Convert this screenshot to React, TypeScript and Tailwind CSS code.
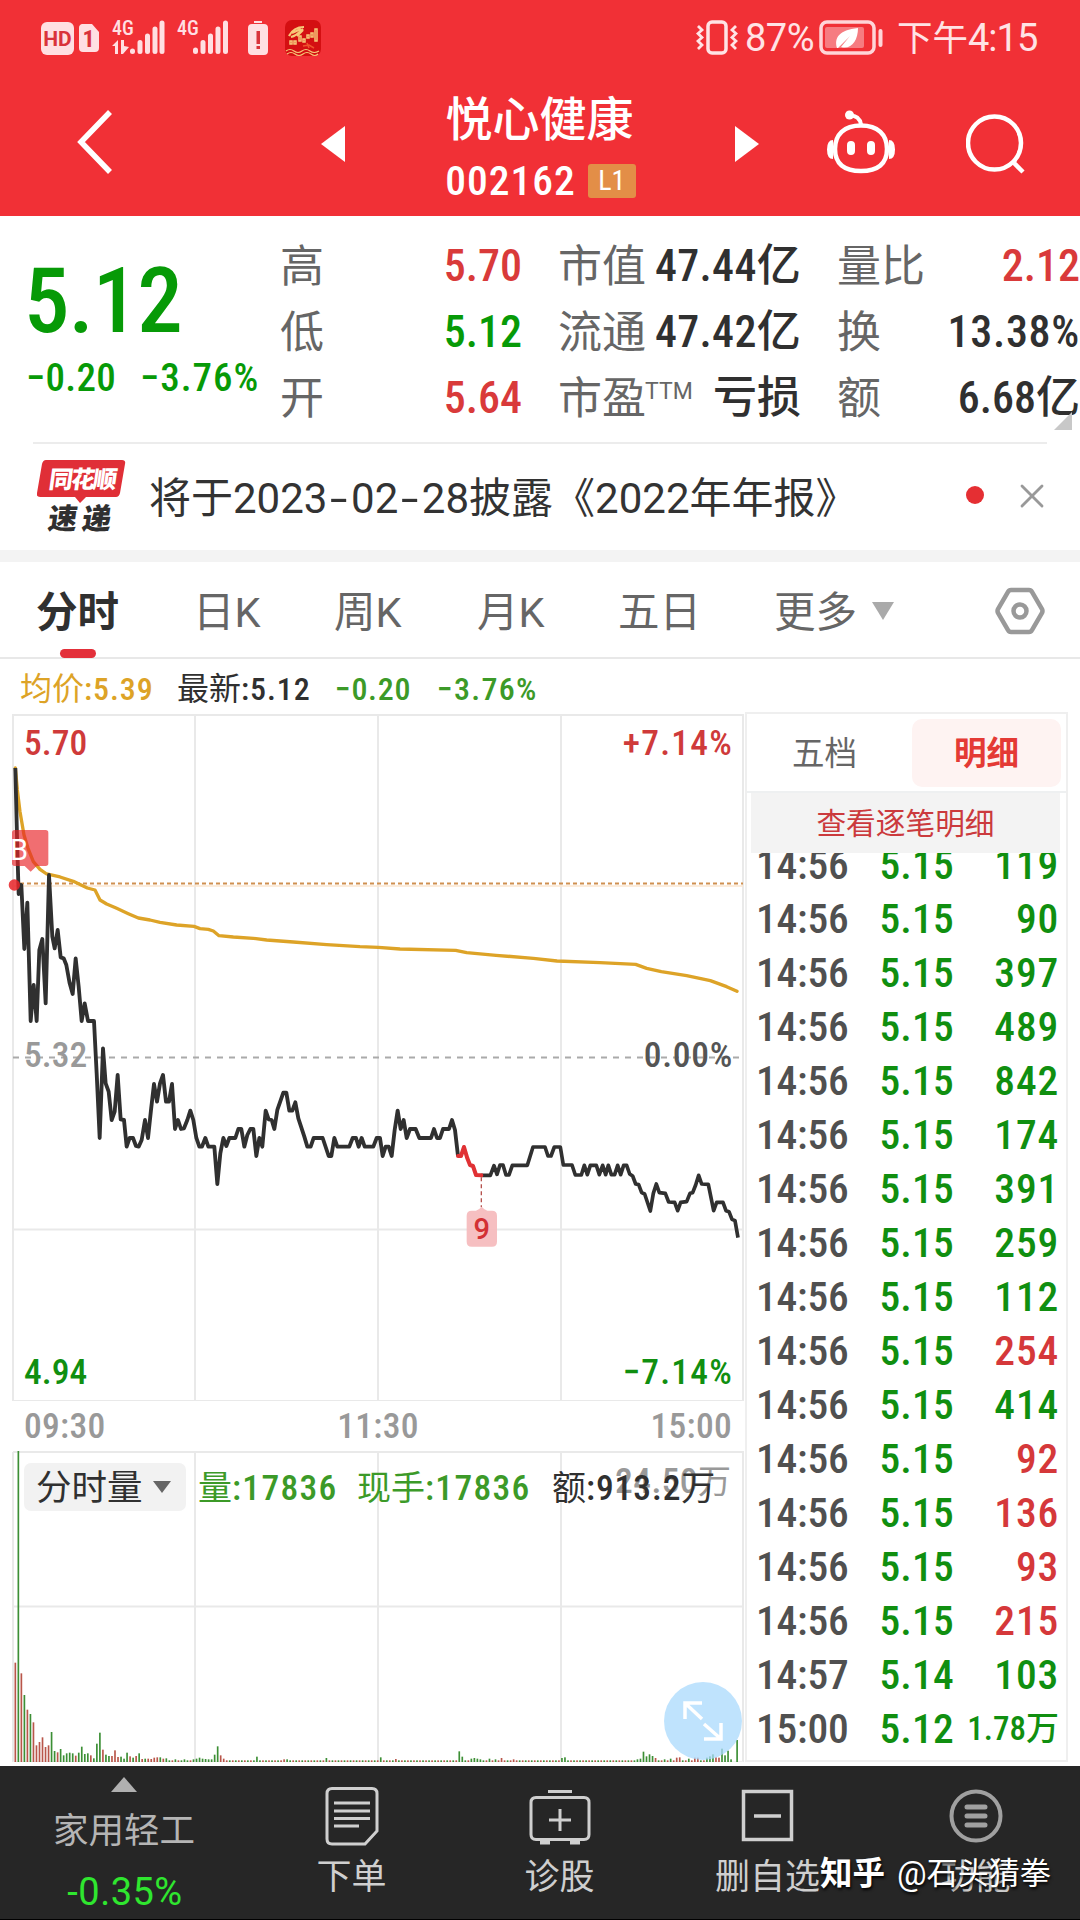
import type { ReactNode } from 'react';
import { X } from 'lucide-react';

const trades = [
  { time: '14:56', price: '5.15', amount: '119', up: false },
  { time: '14:56', price: '5.15', amount: '90', up: false },
  { time: '14:56', price: '5.15', amount: '397', up: false },
  { time: '14:56', price: '5.15', amount: '489', up: false },
  { time: '14:56', price: '5.15', amount: '842', up: false },
  { time: '14:56', price: '5.15', amount: '174', up: false },
  { time: '14:56', price: '5.15', amount: '391', up: false },
  { time: '14:56', price: '5.15', amount: '259', up: false },
  { time: '14:56', price: '5.15', amount: '112', up: false },
  { time: '14:56', price: '5.15', amount: '254', up: true },
  { time: '14:56', price: '5.15', amount: '414', up: false },
  { time: '14:56', price: '5.15', amount: '92', up: true },
  { time: '14:56', price: '5.15', amount: '136', up: true },
  { time: '14:56', price: '5.15', amount: '93', up: true },
  { time: '14:56', price: '5.15', amount: '215', up: true },
  { time: '14:57', price: '5.14', amount: '103', up: false },
  { time: '15:00', price: '5.12', amount: '1.78万', up: false },
];

// Chart lines, in thirds of a pixel
const pricePoints =
  '46,84 52,330 56,462 64,435 73,627 82,488 92,843 101,735 110,843 118,630 127,597 137,790 147,405 157,590 164,625 173,570 182,652 191,655 199,675 209,730 218,762 227,655 236,740 245,843 254,790 264,843 282,843 290,1000 299,1194 309,925 317,1030 326,1055 335,1140 344,1115 353,1005 362,1138 372,1140 380,1220 389,1194 399,1194 408,1218 416,1220 425,1200 435,1140 444,1194 453,1110 462,1032 471,1085 480,1030 489,1005 498,1085 507,1085 516,1032 525,1167 534,1140 543,1167 552,1165 562,1140 571,1112 580,1140 589,1194 598,1220 606,1220 616,1194 625,1220 643,1220 652,1332 661,1240 670,1194 679,1218 688,1194 706,1194 715,1167 724,1167 733,1220 742,1185 751,1167 760,1167 769,1248 778,1194 787,1220 797,1112 806,1138 815,1140 823,1167 832,1110 850,1058 859,1058 868,1112 877,1112 886,1087 895,1135 913,1190 922,1220 932,1220 941,1194 968,1194 986,1248 994,1248 1003,1194 1012,1220 1048,1220 1058,1194 1068,1194 1076,1220 1085,1194 1094,1220 1120,1220 1130,1194 1140,1194 1148,1248 1157,1220 1166,1220 1175,1248 1184,1170 1193,1112 1202,1167 1211,1140 1220,1194 1230,1167 1247,1167 1258,1194 1293,1194 1302,1167 1311,1194 1320,1194 1329,1167 1347,1167 1356,1140 1365,1170 1374,1248';
const signalPoints = '1374,1248 1383,1248 1392,1221 1402,1255 1410,1275 1419,1278 1428,1305 1444,1306';
const closingPoints =
  '1444,1306 1471,1306 1482,1277 1491,1303 1500,1275 1509,1275 1518,1305 1527,1305 1537,1276 1582,1276 1599,1221 1635,1221 1644,1248 1653,1248 1663,1221 1681,1221 1690,1275 1716,1275 1726,1305 1744,1305 1753,1276 1762,1304 1771,1276 1789,1276 1798,1304 1808,1276 1817,1304 1825,1276 1834,1304 1844,1304 1853,1276 1862,1304 1871,1276 1880,1276 1889,1302 1898,1308 1907,1332 1916,1334 1925,1358 1934,1362 1951,1413 1960,1360 1969,1332 1978,1358 1996,1360 2006,1386 2024,1387 2033,1412 2042,1387 2060,1385 2070,1360 2078,1358 2087,1335 2096,1306 2105,1332 2125,1333 2141,1412 2150,1387 2169,1387 2178,1412 2187,1415 2196,1438 2205,1442 2214,1493';
const averagePoints =
  '46,84 52,150 60,215 72,285 84,325 100,365 120,388 140,402 180,411 220,424 262,444 285,450 300,480 320,492 350,505 385,521 415,534 450,540 480,547 530,555 582,559 600,566 625,568 640,573 657,587 700,591 760,595 800,600 880,606 980,614 1080,620 1135,622 1200,627 1367,631 1400,638 1488,646 1600,655 1671,663 1800,668 1907,673 1940,685 1984,695 2060,707 2131,722 2180,740 2211,754';

// Opening volume bars, one per minute: [height, rising]
const opening: [number, boolean][] = [
  [298, true], [934, false], [266, true], [201, false], [157, true], [144, false], [119, true], [50, true], [60, true], [74, true],
  [45, true], [50, true], [90, false], [33, false], [29, true], [39, false], [20, false], [26, false], [28, false], [26, false],
  [19, true], [28, false], [46, false], [24, false], [26, false], [20, true], [11, false], [55, false], [88, false], [37, true],
  [22, false], [18, false], [18, true], [35, true], [15, true], [16, false], [10, false], [28, false], [17, true], [13, false],
  [18, true], [26, false], [9, true], [10, false], [10, true], [9, true], [13, true], [14, true], [14, false], [10, true],
];

const spikes: Record<number, number> = {
  50: 11, 53: 8, 56: 8, 59: 8, 60: 10, 61: 13, 62: 10, 63: 9, 64: 8, 65: 8, 66: 22, 67: 47, 68: 20, 69: 10,
  80: 16, 89: 8, 90: 8, 103: 12, 121: 14, 126: 9, 147: 32, 148: 16, 151: 10, 152: 12, 153: 10, 154: 8, 157: 10, 159: 8, 161: 12, 165: 8,
  181: 12, 182: 14, 206: 8, 207: 10, 208: 31, 209: 17, 210: 23, 211: 18, 212: 12, 215: 8, 217: 10, 219: 13, 220: 14, 223: 10,
  225: 13, 226: 13, 229: 13, 230: 17, 231: 23, 232: 14, 233: 13, 234: 40, 235: 20, 236: 34, 237: 8, 238: 0, 239: 66,
};
const redMinutes = [68, 69, 89, 126, 161, 165, 212, 219, 220, 225, 226, 232, 233];

const volumes = Array.from({ length: 240 }, (_, i) => {
  if (i < opening.length) return { height: opening[i][0], up: opening[i][1] };
  return { height: spikes[i] ?? 5, up: redMinutes.includes(i) || (!(i in spikes) && i % 2 === 0) };
});

function StatusBar() {
  return (
    <div className="flex h-[74px] items-center pt-[2px] text-[#ffe3e5]">
      <svg className="ml-[41px]" width="284" height="54" viewBox="0 -8 284 54" fill="#ffdfe2">
        <rect x="0" y="3" width="33" height="33" rx="6" />
        <text x="16.500" y="27" textAnchor="middle" fontSize="21" fontWeight="700" fill="#d9333b" className="font-stretch-[95%]">HD</text>
        <path d="M41 5h10l7 8v16a4 4 0 0 1-4 4H42a4 4 0 0 1-4-4V9a4 4 0 0 1 3-4z" />
        <text x="47.500" y="28" textAnchor="middle" fontSize="24" fontWeight="700" fill="#d9333b">1</text>
        <text x="71" y="16" fontSize="20" fontWeight="500">4G</text>
        <path d="M71 27l6-6v14h-3v-8zM80 21h3v6l5 1-6 7h-2z" />
        <g stroke="#ffdfe2" strokeWidth="5" strokeLinecap="round">
          <path d="M91.500 32v.5M99 23.500v9M106.500 17v15.500M114 10v22.500M121 4v28.500" />
          <path d="M154.500 31v1.500M162 23.500v9M169.500 17v15.500M177 10v22.500M184.500 4v28.500" />
        </g>
        <text x="136" y="16" fontSize="20" fontWeight="500">4G</text>
        <path d="M213 2h8v2h-8zM211 5h12a4 4 0 0 1 4 4v23a4 4 0 0 1-4 4h-12a4 4 0 0 1-4-4V9a4 4 0 0 1 4-4z" />
        <path d="M215.500 12h3.500v13h-3.500zM215.500 27h3.500v3h-3.500z" fill="#d9333b" />
        <rect x="244" y="1" width="36" height="36" rx="7" fill="#d40f12" />
        <g fill="none" stroke="#f6c878" strokeWidth="1.500">
          <path d="M248 17c3-6 8-9 15-9M250 18c5-1 8-4 12-8M251 14l9-4M256 17l6-6" strokeWidth="2.200" />
          <path d="M249 22h2v3h-2zM253 22h2v3h-2zM258 17h2v5h-2zM262 20h2v3h-2zM266 16h2v3h-2zM270 14h2v4h-2zM274 10h2v12h-2z" />
          <path d="M245 32q4-3 8 0t8 0 8 0 9 0M246 35q4-3 8 0t8 0 8 0 7 0" strokeWidth="1.200" />
          <path d="M262 27l6-1 5 3M266 24l2 5" stroke="#f0522d" />
        </g>
      </svg>
      <svg className="ml-[371px]" width="42" height="36" viewBox="0 0 42 36" fill="none" stroke="#ffe3e5" strokeWidth="3">
        <rect x="12" y="2" width="18" height="31" rx="4" strokeWidth="3.500" />
        <path d="M2 6l4 4-4 3.500 4 4-4 3.500 4 4-4 4M40 6l-4 4 4 3.500-4 4 4 3.500-4 4 4 4" strokeWidth="2.800" />
      </svg>
      <span className="ml-[7px] w-[70px] text-[38px] leading-none tracking-[-0.5px] font-stretch-[90%]">87%</span>
      <svg className="ml-[4px]" width="66" height="36" viewBox="0 0 66 36" fill="none">
        <rect x="2" y="2" width="53" height="31" rx="6" stroke="#ffd5d8" strokeWidth="3.500" />
        <rect x="6" y="7" width="39" height="21" rx="2" fill="#f67c81" />
        <path d="M18 28c-3-10 2-18 21-20 0 13-7 22-17 19l9-11-12 12z" fill="#fff" />
        <path d="M61.500 11v14" stroke="#ffd5d8" strokeWidth="4" strokeLinecap="round" />
      </svg>
      <span className="ml-[12px] text-[35.500px] leading-none whitespace-nowrap">
        下午<span className="text-[38px] tracking-[-1px] font-stretch-[88%]">4:15</span>
      </span>
    </div>
  );
}

function Header() {
  return (
    <header className="h-[216px] shrink-0 bg-[#f13036] text-white">
      <StatusBar />
      <div className="flex h-[140px] items-center">
        <svg className="mb-1 ml-[76px]" width="38" height="66" viewBox="0 0 38 66" fill="none" stroke="#fff" strokeWidth="5.500">
          <path d="M34 3L5 33l29 30" />
        </svg>
        <svg className="ml-[207px]" width="24" height="36" viewBox="0 0 24 36" fill="#fff">
          <path d="M24 0v36L0 18z" />
        </svg>
        <div className="flex w-[390px] flex-col items-center">
          <h1 className="mt-[2px] ml-[-1px] text-[47px] leading-[56px] font-medium">悦心健康</h1>
          <div className="mt-[16px] ml-px flex h-[34px] items-center gap-[12px]">
            <span className="text-[41.500px] leading-none font-medium tracking-[1px]">002162</span>
            <span className="flex h-[34px] w-[48px] items-center justify-center rounded-[3px] bg-[#e38e47] text-[28px] leading-none">L1</span>
          </div>
        </div>
        <svg width="24" height="36" viewBox="0 0 24 36" fill="#fff">
          <path d="M0 0v36l24-18z" />
        </svg>
        <svg className="mb-1 ml-[67px]" width="70" height="64" viewBox="0 0 70 64" fill="none" stroke="#fff">
          <path d="M35 15.500c17 0 26 9 26 23.500s-9 22-26 22-26-7.500-26-22 9-23.500 26-23.500z" strokeWidth="4.500" />
          <path d="M7 31c-3 0-5 3-5 8.500s2 8.500 5 8.500M63 31c3 0 5 3 5 8.500s-2 8.500-5 8.500" fill="#fff" strokeWidth="2" />
          <path d="M24 5.500c7 0 10 3 11 9" strokeWidth="4" />
          <circle cx="23.500" cy="5" r="4.500" fill="#fff" stroke="none" />
          <path d="M25 35v6M45 35v6" strokeWidth="8" strokeLinecap="round" />
        </svg>
        <svg className="mb-px ml-[70px]" width="60" height="60" viewBox="0 0 60 60" fill="none" stroke="#fff" strokeWidth="4.500">
          <circle cx="28.500" cy="29" r="26.500" />
          <path d="M47 48l10 10" />
        </svg>
      </div>
    </header>
  );
}

function QuoteRow({ label, value, color, sup }: { label: string; value: string; color: string; sup?: string }) {
  return (
    <div className="flex h-[66px] items-center justify-between leading-none whitespace-nowrap">
      <span className="flex pt-px text-[44px] text-[#666]">
        {label}
        {sup && <span className="mt-[3px] ml-[-1px] text-[23px] font-stretch-[100%]">{sup}</span>}
      </span>
      <span className={`text-[44px] font-medium ${color}`}>{value}</span>
    </div>
  );
}

function Quote() {
  return (
    <section className="relative flex h-[226px] shrink-0">
      <div className="w-[280px] pl-[24px] whitespace-nowrap text-[#079a07]">
        <div className="mt-[39px] text-[91px] leading-[92px] font-medium tracking-[-1px]">5.12</div>
        <div className="mt-[11px] flex gap-[24px] pl-[2px] text-[39px] leading-[40px] font-medium">
          <span className="tracking-[0.3px]">−0.20</span>
          <span className="tracking-[1px] font-stretch-[86%]">−3.76%</span>
        </div>
      </div>
      <div className="mt-[17px] w-[242px]">
        <QuoteRow label="高" value="5.70" color="text-[#d93a3a]" />
        <QuoteRow label="低" value="5.12" color="text-[#079a07]" />
        <QuoteRow label="开" value="5.64" color="text-[#d93a3a]" />
      </div>
      <div className="mt-[17px] ml-[36px] w-[243px]">
        <QuoteRow label="市值" value="47.44亿" color="text-[#303030] tracking-[0.3px]" />
        <QuoteRow label="流通" value="47.42亿" color="text-[#303030] tracking-[0.3px]" />
        <QuoteRow label="市盈" sup="TTM" value="亏损" color="text-[#303030]" />
      </div>
      <div className="mt-[17px] ml-[36px] w-[243px]">
        <QuoteRow label="量比" value="2.12" color="text-[#d93a3a]" />
        <QuoteRow label="换" value="13.38%" color="text-[#303030] tracking-[0.7px]" />
        <QuoteRow label="额" value="6.68亿" color="text-[#303030]" />
      </div>
      <svg className="absolute right-[8px] bottom-[12px]" width="18" height="18" viewBox="0 0 18 18" fill="#c8c8c8">
        <path d="M18 0v18H0z" />
      </svg>
    </section>
  );
}

function NewsBar() {
  return (
    <section className="mx-[33px] flex h-[108px] shrink-0 items-center border-t-2 border-[#ececec]">
      <svg className="ml-[4px]" width="90" height="84" viewBox="0 -4 90 84">
        <path d="M9 1h76q4 0 3 4l-5 29q-1 4-4 4H49l-6 6-5-6H3q-4 0-3-4L5 5q1-4 4-4z" fill="#e02f37" />
        <text x="0" y="0" transform="translate(11 29) skewX(-8)" fontSize="24" fontWeight="900" fill="#fff" textLength="68">同花顺</text>
        <text x="0" y="0" transform="translate(10 70) skewX(-8)" fontSize="29" fontWeight="900" fill="#303030" textLength="63">速递</text>
      </svg>
      <p className="mt-[4px] ml-[22px] text-[42px] leading-none whitespace-nowrap text-[#333] font-stretch-[100%]">
        将于2023<span className="mx-[6px] inline-block scale-x-150">-</span>02<span className="mx-[6px] inline-block scale-x-150">-</span>28披露《2022年年报》
      </p>
      <span className="mb-1 ml-auto h-[18px] w-[18px] rounded-full bg-[#e52f33]" />
      <X className="mr-[-5px] mb-[3px] ml-[28px] text-[#999]" size={40} strokeWidth={1.7} />
    </section>
  );
}

function PeriodTabs() {
  return (
    <nav className="relative flex h-[97px] shrink-0 items-center border-b-2 border-[#e8e8e8] pt-[3px] text-[41.500px] leading-none whitespace-nowrap text-[#666] font-stretch-[100%]">
      <span className="ml-[36px] w-[157px] pt-[4px] font-bold text-[#303030]">分时</span>
      <span className="w-[141px] pt-[4px]">日K</span>
      <span className="w-[143px] pt-[4px]">周K</span>
      <span className="w-[141px] pt-[4px]">月K</span>
      <span className="w-[156px] pt-[4px]">五日</span>
      <span className="pt-[4px]">更多</span>
      <svg className="ml-[15px]" width="22" height="18" viewBox="0 0 22 18" fill="#aaa">
        <path d="M0 0h22L11 18z" />
      </svg>
      <svg className="ml-[101px]" width="50" height="48" viewBox="0 0 50 48" fill="none" stroke="#999" strokeWidth="4.500">
        <path d="M16 3h18q2 0 3 2l10 17q1 2 0 4L37 43q-1 2-3 2H16q-2 0-3-2L3 26q-1-2 0-4L13 5q1-2 3-2z" />
        <circle cx="25" cy="24" r="6.500" />
      </svg>
      <span className="absolute bottom-[-1px] left-[60px] h-[9px] w-[36px] rounded-full bg-[#e3303a]" />
    </nav>
  );
}

function PriceChart() {
  return (
    <div className="relative h-[687px] text-[35.500px] leading-none font-medium">
      <svg className="absolute inset-0" width="745" height="687" viewBox="0 0 745 687" fill="none">
        <path d="M13 1h730v686H13zM195 1v686M378 1v686M561 1v686M13 515.500h730" stroke="#e9e9e9" strokeWidth="2" />
        <path d="M13 172h730" stroke="#fbe6cf" strokeWidth="1.500" />
        <path d="M20 169.500h723" stroke="#cf9050" strokeWidth="2" strokeDasharray="4 3" />
        <path d="M13 343.500h726" stroke="#aaa" strokeWidth="2" strokeDasharray="6 6" />
      </svg>
      <div className="relative flex h-full flex-col justify-between pt-[12px] pr-[12px] pb-[11px] pl-[24px]">
        <div className="flex justify-between text-[#cf3a3a]">
          <span>5.70</span>
          <span className="tracking-[1.2px]">+7.14%</span>
        </div>
        <div className="mt-[-5px] flex justify-between text-[#999]">
          <span>5.32</span>
          <span className="tracking-[0.7px] text-[#555]">0.00%</span>
        </div>
        <div className="flex justify-between text-[#108f10]">
          <span>4.94</span>
          <span className="tracking-[1.2px]">−7.14%</span>
        </div>
      </div>
      <svg className="absolute inset-0" width="745" height="687" viewBox="0 0 745 687" fill="none">
        <g transform="translate(0 26) scale(0.33333)" strokeLinejoin="round">
          <polyline points={averagePoints} stroke="#dda327" strokeWidth="10" strokeLinecap="round" />
          <polyline points={pricePoints} stroke="#303030" strokeWidth="11.500" />
          <polyline points={closingPoints} stroke="#303030" strokeWidth="11" />
          <polyline points={signalPoints} stroke="#e03134" strokeWidth="12" strokeLinecap="round" />
          <path d="M1444 1312v90" stroke="#b5524e" strokeWidth="4" strokeDasharray="12 9" />
          <path d="M44 270h93q8 0 8 8v92q0 8-8 8h-27l-18 17-18-17H44q-8 0-8-8v-92q0-8 8-8z" fill="#e82328" fillOpacity="0.660" />
          <circle cx="43" cy="435" r="17" fill="#e82328" fillOpacity="0.850" />
          <path d="M1415 1412h13q8-2 17-12 9 10 17 12h14q15 0 15 15v78q0 15-15 15h-61q-15 0-15-15v-78q0-15 15-15z" fill="#f6bcbe" fillOpacity="0.950" />
        </g>
        <text x="10" y="146" fontSize="29" fontWeight="400" fill="#fff" className="font-stretch-[100%]">B</text>
        <text x="481.700" y="525" textAnchor="middle" fontSize="29" fontWeight="500" fill="#d33034" className="font-stretch-[100%]">9</text>
      </svg>
    </div>
  );
}

function VolumeChart() {
  return (
    <div className="relative h-[311px]">
      <svg className="absolute inset-0" width="745" height="311" viewBox="0 0 745 311" fill="none">
        <path d="M13 1h730v310M13 1v310M195 1v310M378 1v310M561 1v310M13 155.500h730" stroke="#e9e9e9" strokeWidth="2" />
        <path d="M13 310.500h730" stroke="#f0f0f0" />
        <g transform="translate(0 311) scale(0.33333)">
          {volumes.map((bar, i) => (
            <rect key={i} x={43.5 + i * 9.06} y={-bar.height} width="5" height={bar.height} fill={bar.up ? '#b9564a' : '#3c8f35'} />
          ))}
        </g>
      </svg>
      <span className="absolute top-[13px] right-[14px] text-[35.500px] leading-none text-[#999]">
        <span className="font-medium tracking-[0.4px]">24.50</span>
        <span className="text-[33px]">万</span>
      </span>
      <div className="relative flex items-center pt-[12px] pl-[24px] text-[34px] leading-none whitespace-nowrap">
        <button className="flex h-[48px] w-[162px] items-center justify-between rounded-[7px] bg-[#f2f2f2] pr-[15px] pl-[12px] text-[35.500px] text-[#303030]">
          <span className="pt-[4px]">分时量</span>
          <svg width="18" height="12" viewBox="0 0 18 12" fill="#666">
            <path d="M0 0h18L9 12z" />
          </svg>
        </button>
        <span className="ml-[12px] w-[159px] pt-[4px] text-[#3c9a28]">量<span className="text-[35.500px] font-medium tracking-[1.3px]">:17836</span></span>
        <span className="w-[195px] pt-[4px] text-[#3c9a28]">现手<span className="text-[35.500px] font-medium tracking-[1.3px]">:17836</span></span>
        <span className="pt-[4px] text-[#303030]">额<span className="text-[35.500px] font-medium tracking-[0.9px]">:913.2</span>万</span>
      </div>
      <button className="absolute right-[3px] bottom-[2px] flex h-[78px] w-[78px] items-center justify-center rounded-full bg-[#a9dafc]/75">
        <svg width="42" height="42" viewBox="0 0 42 42" fill="none" stroke="#fff" strokeWidth="3.500">
          <path d="M20 3H3v16M3 3l17 16M22 39h17V23M39 39L22 24" />
        </svg>
      </button>
    </div>
  );
}

function TradeList() {
  return (
    <div className="mt-[53px] flex h-[1050px] w-[323px] shrink-0 flex-col border-2 border-[#efefef]">
      <div className="flex h-[79px] shrink-0 items-center border-b-2 border-[#eef0f1] pr-[5px] text-[32.500px] leading-none">
        <span className="flex-1 pt-[4px] pr-[10px] text-center text-[#666]">五档</span>
        <span className="flex h-[68px] w-[149px] items-center justify-center rounded-[10px] bg-[#fef3f2] pt-[3px] font-bold text-[#e43a35]">明细</span>
      </div>
      <div className="mr-[6px] ml-[4px] flex h-[60px] shrink-0 items-center justify-center bg-[#f3f3f3] pt-[2px] text-[29.700px] leading-none text-[#cb3a3d]">查看逐笔明细</div>
      <div className="flex-1 overflow-hidden">
        <ul className="mt-[-15px] pr-[7px] pl-[9px] text-[41.500px] leading-[54px] font-medium">
          {trades.map((t, i) => (
            <li key={i} className="flex h-[54px]">
              <span className="w-[95px] tracking-[-0.2px] text-[#505050]">{t.time}</span>
              <span className="w-[103px] text-right tracking-[0.2px] text-[#108f10]">{t.price}</span>
              <span className={`flex-1 text-right ${t.up ? 'text-[#d5383a]' : 'text-[#108f10]'} ${t.amount.includes('万') ? 'text-[33px]' : 'tracking-[0.8px]'}`}>{t.amount}</span>
            </li>
          ))}
        </ul>
      </div>
    </div>
  );
}

function NavItem({ label, children }: { label: string; children: ReactNode }) {
  return (
    <div className="flex w-[208px] flex-col items-center pt-[20px] text-[35px] leading-[36px] text-[#cfcfcf]">
      <svg width="64" height="60" viewBox="0 0 64 60" fill="none" stroke="#cfcfcf" strokeWidth="3">
        {children}
      </svg>
      <span className="mt-[14px] mr-px">{label}</span>
    </div>
  );
}

function BottomNav() {
  return (
    <footer className="relative flex h-[154px] shrink-0 border-b border-black bg-[#262626]">
      <div className="flex w-[248px] flex-col items-center pt-[11px] whitespace-nowrap">
        <svg width="26" height="15" viewBox="0 0 26 15" fill="#b0b0b0">
          <path d="M13 0l13 15H0z" />
        </svg>
        <span className="mt-[19px] text-[35.500px] leading-[40px] text-[#b5b5b5]">家用轻工</span>
        <span className="mt-[21px] ml-[2px] text-[38px] leading-[40px] tracking-[0.5px] text-[#2fe62f] font-stretch-[92%]">-0.35%</span>
      </div>
      <NavItem label="下单">
        <path d="M12 2.500h40q5 0 5 5V45L45 58H12q-5 0-5-5V7.500q0-5 5-5z" />
        <path d="M14 17h36M14 25h36M14 32.500h36M14 40h25" />
      </NavItem>
      <NavItem label="诊股">
        <path d="M8 11.500h48q5 0 5 5v32q0 5-5 5H8q-5 0-5-5v-32q0-5 5-5zM20 5.500h24M32 23v22M21 34h22" />
        <path d="M12 56.500h10M42 56.500h10" strokeWidth="4" />
      </NavItem>
      <NavItem label="删自选">
        <path d="M7.500 5.500h48v48h-48zM18 30h27" strokeWidth="3.500" />
      </NavItem>
      <NavItem label="功能">
        <circle cx="32" cy="30" r="24.500" stroke="#a0a0a0" strokeWidth="4" />
        <path d="M23 21h18M23 30h18M23 39h18" stroke="#a0a0a0" strokeWidth="5" strokeLinecap="round" />
      </NavItem>
      <div className="absolute top-[90px] left-[820px] flex items-center text-[31px] leading-[36px] whitespace-nowrap text-white [text-shadow:1px_2px_3px_#000]">
        <span className="text-[32.500px] font-bold">知乎</span>
        <span className="ml-[12px] text-[33px] font-stretch-[100%]">@</span>
        <span>石头猜拳</span>
      </div>
    </footer>
  );
}

export default function App() {
  return (
    <div className='flex h-[1920px] w-[1080px] flex-col overflow-hidden bg-white font-[Roboto,"Noto_Sans_CJK_SC",sans-serif] font-stretch-[82%]'>
      <Header />
      <Quote />
      <NewsBar />
      <div className="h-[12px] shrink-0 bg-[#f3f3f3]" />
      <PeriodTabs />
      <main className="flex h-[1107px] shrink-0">
        <div className="w-[745px]">
          <div className="flex h-[55px] items-center pt-[5px] pl-[20px] text-[32px] leading-none whitespace-nowrap">
            <span className="w-[157px] text-[#dda327]">均价<span className="font-medium tracking-[0.9px]">:5.39</span></span>
            <span className="w-[158px] text-[#303030]">最新<span className="font-medium tracking-[0.9px]">:5.12</span></span>
            <span className="w-[102px] font-medium tracking-[0.7px] text-[#3c9a28]">−0.20</span>
            <span className="font-medium tracking-[1.3px] text-[#3c9a28]">−3.76%</span>
          </div>
          <PriceChart />
          <div className="flex h-[50px] items-center justify-between pt-[2px] pr-[13px] pl-[24px] text-[35.500px] leading-none font-medium tracking-[0.3px] text-[#999]">
            <span>09:30</span>
            <span>11:30</span>
            <span>15:00</span>
          </div>
          <VolumeChart />
        </div>
        <TradeList />
      </main>
      <BottomNav />
    </div>
  );
}
